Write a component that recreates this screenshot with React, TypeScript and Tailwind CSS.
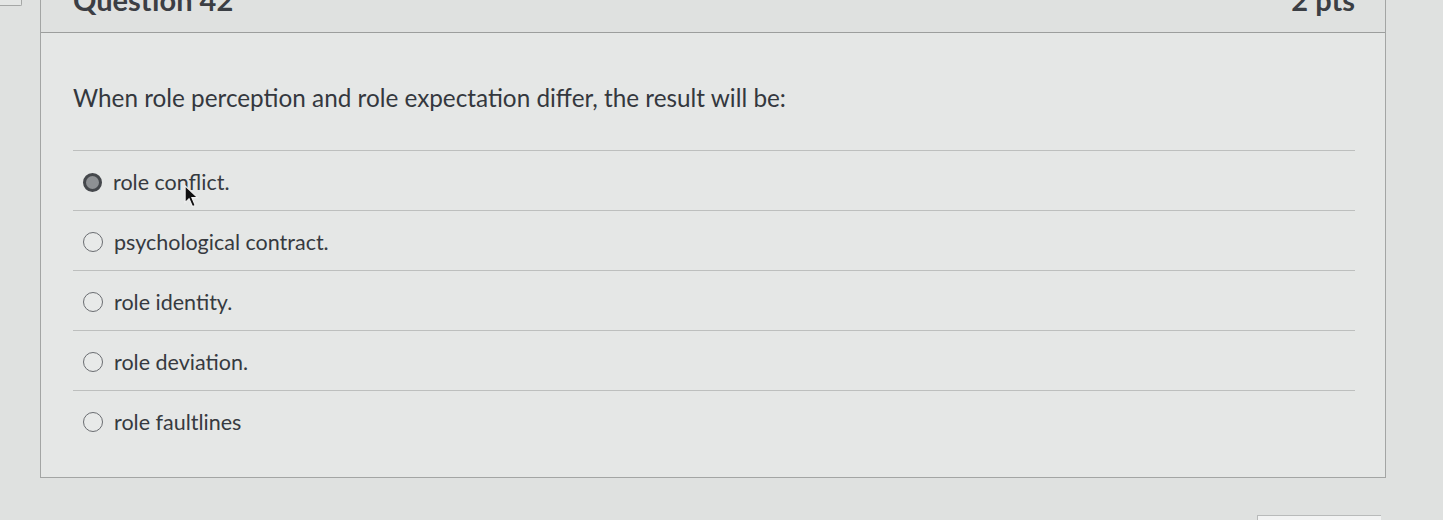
import React from "react";

const options = [
  "role conflict.",
  "psychological contract.",
  "role identity.",
  "role deviation.",
  "role faultlines",
];

function Radio({ checked }: { checked: boolean }) {
  return checked ? (
    <span className="inline-block w-[19px] h-[19px] rounded-full border-[3.5px] border-[#45484c] bg-[#8e9194] shrink-0" />
  ) : (
    <span className="inline-block w-[20px] h-[20px] rounded-full border-[1.5px] border-[#6a6d71] bg-[#e8eae9] shrink-0" />
  );
}

export default function App() {
  return (
    <div
      className="w-[1443px] h-[520px] overflow-hidden bg-[#dfe1e0] relative"
      style={{ fontFamily: "Lato, 'Open Sans', sans-serif" }}
    >
      <div className="absolute left-0 top-0 w-[22px] h-[6px] border-b border-r border-[#a5a7a6] rounded-br-[2px] bg-[#e4e6e5]" />
      <div className="ml-[40px] w-[1346px] -mt-[30px] border border-[#a3a5a4] bg-[#e5e7e6]">
        <div className="flex justify-between pl-[32px] pr-[30px] pt-[14px] pb-[18px] bg-[#dfe1e0] border-b border-[#9c9e9d]">
          <span className="text-[29px] leading-[29px] font-bold text-[#3b3e44]">Question 42</span>
          <span className="text-[29px] leading-[29px] font-bold text-[#3b3e44]">2 pts</span>
        </div>
        <div className="pl-[32px] pr-[30px] pt-[52px] pb-[27px]">
          <p className="text-[24.3px] leading-[26px] text-[#34383e] pb-[39px]">
            When role perception and role expectation differ, the result will be:
          </p>
          {options.map((o, i) => (
            <div
              key={o}
              className={`border-t border-[#bdbfbe] h-[60px] flex items-start pt-[18px] ${i === 0 ? "relative" : ""}`}
            >
              <div className="flex items-center gap-[11px] pl-[10px] h-[26px]">
                <Radio checked={i === 0} />
                <span className="text-[21.5px] leading-[26px] text-[#363a40]">{o}</span>
              </div>
              {i === 0 && (
                <svg
                  className="absolute left-[111px] top-[33px]"
                  width="18"
                  height="26"
                  viewBox="0 0 16 22"
                >
                  <path
                    d="M1 1 L1 16 L4.5 12.5 L7.5 19.5 L10 18.5 L7 11.5 L12 11.5 Z"
                    fill="#111"
                    stroke="#f2f2f2"
                    strokeWidth="1"
                  />
                </svg>
              )}
            </div>
          ))}
        </div>
      </div>
      <div className="absolute left-[1257px] top-[515px] w-[124px] h-[10px] bg-[#f2f3f3] border-t border-l border-[#b8baba]" />
    </div>
  );
}
